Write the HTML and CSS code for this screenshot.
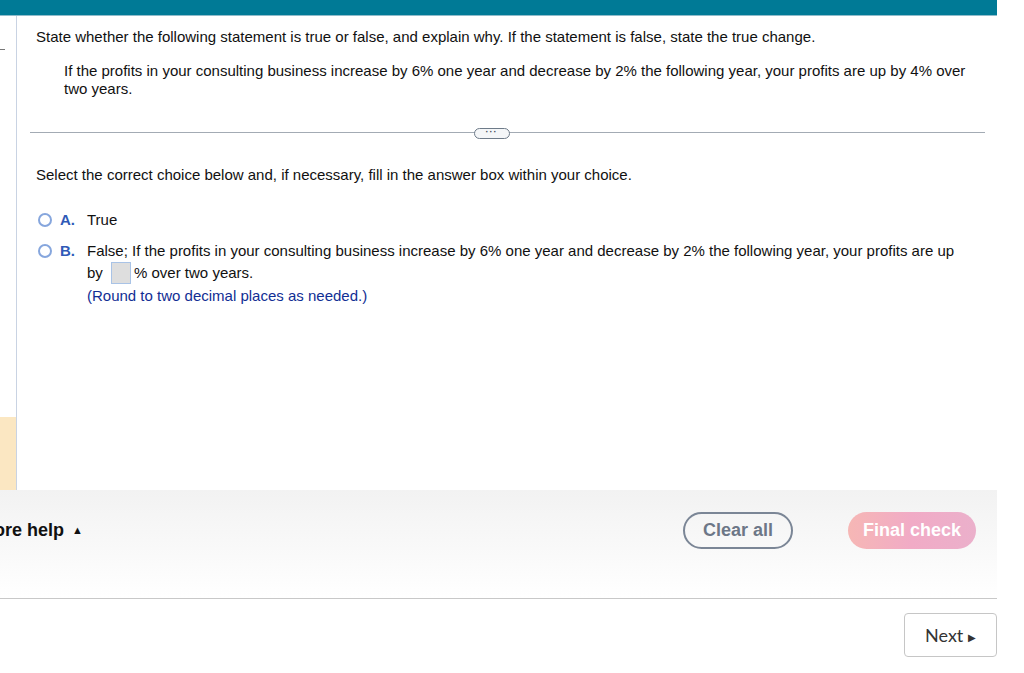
FILE: index.html
```html
<!DOCTYPE html>
<html>
    <head>
        <title>
            question
        </title>
        <link rel="stylesheet" href="styles.css">
    </head>
    <body>
        <div class="topbar"></div>
        <div class="workspace">
            <div class="side">
                <div class="dash"></div>
                <div class="note"></div>
            </div>
            <main class="main">
                <p class="prompt">State whether the following statement is true or false, and explain why. If the statement is false, state the true change.</p>
                <p class="statement">If the profits in your consulting business increase by 6% one year and decrease by 2% the following year, your profits are up by 4% over two years.</p>
                <div class="divider">
                    <span class="more">&middot;&middot;&middot;</span>
                </div>
                <p class="select">Select the correct choice below and, if necessary, fill in the answer box within your choice.</p>
                <div class="choices">
                    <div class="choice">
                        <span class="radio"></span>
                        <span class="letter">A.</span>
                        <div class="text">True</div>
                    </div>
                    <div class="choice">
                        <span class="radio"></span>
                        <span class="letter">B.</span>
                        <div class="text">
                            False; If the profits in your consulting business increase by 6% one year and decrease by 2% the following year, your profits are up by <span class="box"></span>% over two years.
                            <div class="hint">(Round to two decimal places as needed.)</div>
                        </div>
                    </div>
                </div>
            </main>
        </div>
        <div class="footer">
            <div class="help">More help <span class="caret">&#9650;</span></div>
            <div class="actions">
                <button class="clear">Clear all</button>
                <button class="final">Final check</button>
            </div>
        </div>
        <div class="bottom">
            <button class="next">Next <span class="arrow">&#9654;</span></button>
        </div>
    </body>
</html>
```

FILE: styles.css
```css
body{
    margin: 0;
    font-family: "Liberation Sans", Arial, sans-serif;
    color: #111;
    width: 997px;
    overflow: hidden;
}
p{
    margin: 0;
}
.topbar{
    height: 15px;
    background-color: #007a96;
    border-bottom: 1px solid #8fbccb;
}
.workspace{
    display: flex;
    height: 474px;
}
.side{
    width: 16px;
    border-right: 1px solid #c9d3e3;
    display: flex;
    flex-direction: column;
    justify-content: space-between;
}
.dash{
    width: 5px;
    height: 1px;
    background-color: #777;
    margin-top: 33px;
}
.note{
    height: 73px;
    background-color: #fbe7c2;
}
.main{
    flex: 1;
    padding: 12px 12px 0 19px;
    font-size: 15px;
    line-height: 18px;
}
.statement{
    margin: 16px 10px 0 28px;
}
.divider{
    margin: 28px 0 0 -6px;
    height: 14px;
    position: relative;
    display: flex;
    align-items: center;
    justify-content: center;
}
.divider::before{
    content: "";
    position: absolute;
    left: 0;
    right: 0;
    top: 6px;
    border-top: 1px solid #a3abb4;
}
.more{
    position: relative;
    margin-left: -32px;
    width: 34px;
    height: 9px;
    border: 1px solid #6e7b89;
    border-radius: 6px;
    background-color: #f4f6f8;
    font-size: 9px;
    line-height: 7px;
    text-align: center;
    color: #445;
    letter-spacing: 1px;
    font-weight: bold;
}
.select{
    margin-top: 26px;
}
.choices{
    margin-top: 27px;
    display: flex;
    flex-direction: column;
    row-gap: 11px;
}
.choice{
    display: flex;
    align-items: flex-start;
    padding-left: 2px;
}
.radio{
    width: 14px;
    height: 14px;
    border: 2px solid #86a6dd;
    border-radius: 50%;
    box-sizing: border-box;
    margin-top: 2px;
    flex: none;
}
.letter{
    color: #2f5ab7;
    font-weight: bold;
    width: 27px;
    margin-left: 8px;
    flex: none;
}
.text{
    line-height: 22px;
    margin-top: -2px;
    padding-right: 20px;
}
.box{
    display: inline-block;
    width: 18px;
    height: 20px;
    background-color: #dedede;
    border: 1px solid #a9c3e6;
    vertical-align: -6px;
    margin: 0 3px 0 4px;
}
.hint{
    color: #112e94;
    line-height: 23px;
}
.footer{
    height: 108px;
    background: linear-gradient(#f2f2f2, #ffffff);
    display: flex;
    align-items: flex-start;
    justify-content: space-between;
    padding-top: 22px;
    box-sizing: border-box;
}
.help{
    font-size: 18px;
    font-weight: bold;
    margin-left: -21px;
    margin-top: 8px;
}
.caret{
    font-size: 11px;
    vertical-align: 2px;
    margin-left: 3px;
}
.actions{
    display: flex;
    column-gap: 55px;
    margin-right: 21px;
}
button{
    font-family: "Liberation Sans", Arial, sans-serif;
    cursor: pointer;
}
.clear{
    width: 110px;
    height: 37px;
    border: 2px solid #7b8696;
    border-radius: 19px;
    background-color: transparent;
    color: #6d7787;
    font-size: 18px;
    font-weight: bold;
}
.final{
    width: 128px;
    height: 37px;
    border: none;
    border-radius: 19px;
    background: linear-gradient(90deg, #f6b7b5, #f1abc6, #ebb0cb);
    color: #fff;
    font-size: 18px;
    font-weight: bold;
}
.bottom{
    border-top: 1px solid #c8c8c8;
    display: flex;
    justify-content: flex-end;
    padding-top: 14px;
}
.next{
    width: 93px;
    height: 44px;
    border: 1px solid #c6c6c6;
    border-radius: 4px;
    background-color: #fff;
    color: #333;
    font-size: 18px;
    font-family: Lato, "Liberation Sans", sans-serif;
}
.arrow{
    font-size: 10px;
    vertical-align: middle;
}
```
